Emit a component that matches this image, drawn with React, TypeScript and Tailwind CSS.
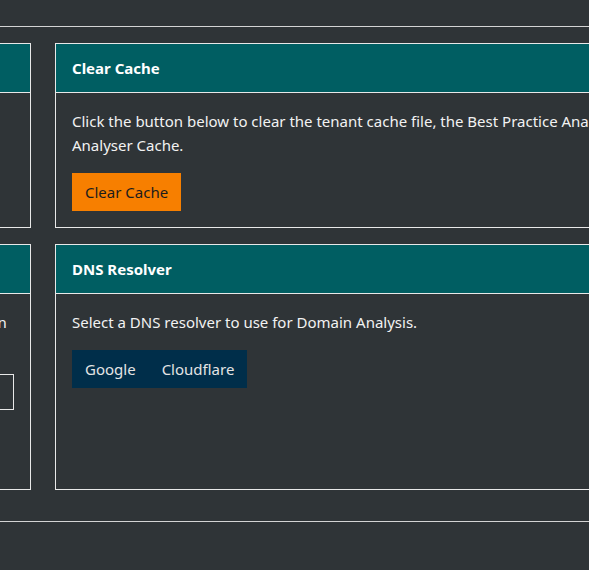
const font = { fontFamily: '"Noto Sans", "Open Sans", sans-serif' };

function Card({ title, children }: { title: string; children: React.ReactNode }) {
  return (
    <div className="flex flex-col border border-[#e8e8e8]">
      <div className="flex h-[49px] items-center border-b border-[#e8e8e8] bg-[#005e62] px-4 font-bold text-white">
        {title}
      </div>
      <div className="flex-1 p-4">{children}</div>
    </div>
  );
}

export default function App() {
  return (
    <div
      style={font}
      className="min-h-screen overflow-hidden bg-[#2f3437] pt-[26px] text-[15px] leading-6 text-[#f2f2f2]"
    >
      <div className="-ml-[258px] w-[1000px] border-y border-[#d4d4d4] pt-4 pb-[31px]">
        <div className="grid grid-cols-[289px_1fr] gap-x-6 gap-y-4">
          {/* row 1 */}
          <Card title="Tenant Settings">
            <p className="whitespace-nowrap">Choose the default tenant.</p>
          </Card>
          <Card title="Clear Cache">
            <p className="mb-4">
              Click the button below to clear the tenant cache file, the Best Practice Analyser
              <br />
              Analyser Cache.
            </p>
            <button className="h-[38px] bg-[#f77f00] px-[13px] text-[#1c1c1c]">Clear Cache</button>
          </Card>

          {/* row 2 */}
          <Card title="Default Domain">
            <p className="mb-4 whitespace-nowrap">
              Select the default tenant to load on
              <br />
              the home page.
            </p>
            <input className="h-9 w-full border border-[#e8e8e8] bg-transparent px-3 outline-none" />
            <p className="mt-[15px] whitespace-nowrap">
              Leave blank to use
              <br />
              the first tenant.
            </p>
          </Card>
          <Card title="DNS Resolver">
            <p className="mb-4">Select a DNS resolver to use for Domain Analysis.</p>
            <div className="inline-flex bg-[#002e4a] text-[#e4e4e4]">
              <button className="h-[38px] px-[13px]">Google</button>
              <button className="h-[38px] px-[13px]">Cloudflare</button>
            </div>
          </Card>
        </div>
      </div>
    </div>
  );
}
